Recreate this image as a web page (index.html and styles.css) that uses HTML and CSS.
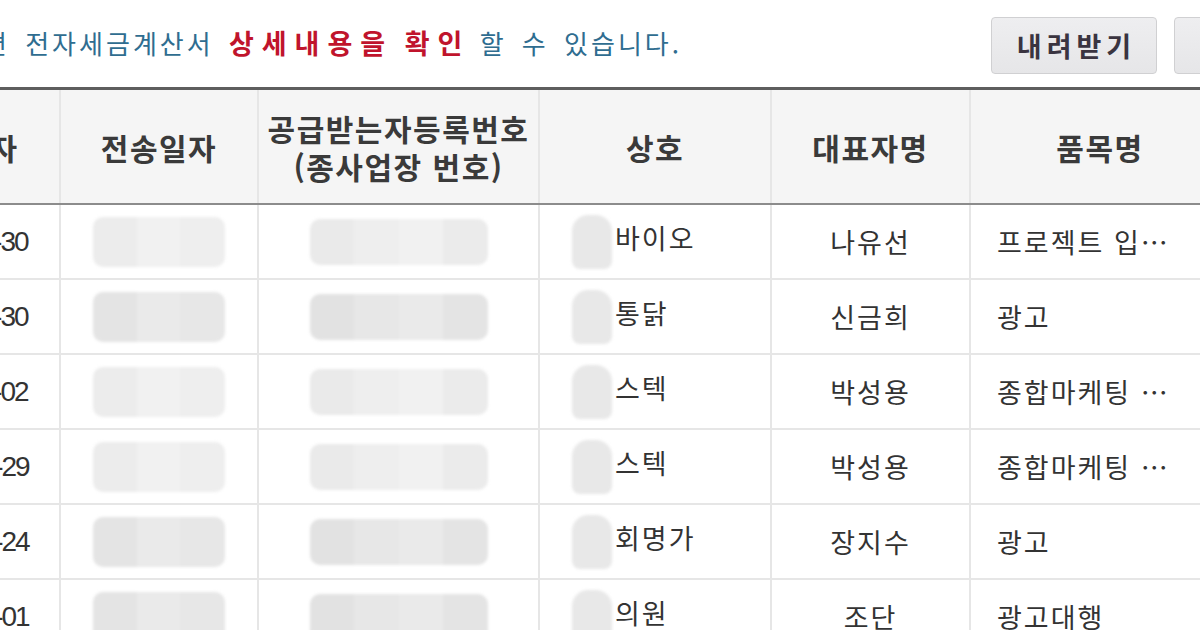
FILE: index.html
```html
<!DOCTYPE html>
<html lang="ko">
<head>
<meta charset="utf-8">
<title>전자세금계산서 목록</title>
<link rel="stylesheet" href="styles.css">
</head>
<body>
<div class="topbar">
  <p class="notice"><span class="cut">면</span> 전자세금계산서 <strong>상세내용을 확인</strong> 할 수 있습니다.</p>
  <div class="actions">
    <button class="btn">내려받기</button>
    <button class="btn btn-next">인쇄하기</button>
  </div>
</div>
<table class="grid">
  <colgroup>
    <col class="c1"><col class="c2"><col class="c3"><col class="c4"><col class="c5"><col class="c6">
  </colgroup>
  <thead>
    <tr>
      <th>작성일자</th>
      <th>전송일자</th>
      <th><span class="th-line">공급받는자등록번호</span><span class="th-line">(종사업장 번호)</span></th>
      <th>상호</th>
      <th>대표자명</th>
      <th>품목명</th>
    </tr>
  </thead>
  <tbody>
    <tr>
      <td class="date">2023-11-30</td>
      <td><span class="blob b-date v1"></span></td>
      <td><span class="blob b-reg v1"></span></td>
      <td class="name"><span class="blob b-name"></span>바이오</td>
      <td>나유선</td>
      <td class="item">프로젝트 입…</td>
    </tr>
    <tr>
      <td class="date">2023-11-30</td>
      <td><span class="blob b-date v2"></span></td>
      <td><span class="blob b-reg v2"></span></td>
      <td class="name"><span class="blob b-name"></span>통닭</td>
      <td>신금희</td>
      <td class="item">광고</td>
    </tr>
    <tr>
      <td class="date">2023-11-02</td>
      <td><span class="blob b-date v1"></span></td>
      <td><span class="blob b-reg v1"></span></td>
      <td class="name"><span class="blob b-name"></span>스텍</td>
      <td>박성용</td>
      <td class="item">종합마케팅 …</td>
    </tr>
    <tr>
      <td class="date">2023-10-29</td>
      <td><span class="blob b-date v1"></span></td>
      <td><span class="blob b-reg v1"></span></td>
      <td class="name"><span class="blob b-name"></span>스텍</td>
      <td>박성용</td>
      <td class="item">종합마케팅 …</td>
    </tr>
    <tr>
      <td class="date">2023-10-24</td>
      <td><span class="blob b-date v2"></span></td>
      <td><span class="blob b-reg v2"></span></td>
      <td class="name"><span class="blob b-name"></span>회명가</td>
      <td>장지수</td>
      <td class="item">광고</td>
    </tr>
    <tr>
      <td class="date">2023-10-01</td>
      <td><span class="blob b-date v2"></span></td>
      <td><span class="blob b-reg v2"></span></td>
      <td class="name"><span class="blob b-name"></span>의원</td>
      <td>조단</td>
      <td class="item">광고대행</td>
    </tr>
  </tbody>
</table>
</body>
</html>
```
FILE: styles.css
```css
* { box-sizing: border-box; }
html, body {
  margin: 0;
  padding: 0;
  background: #ffffff;
  width: 1200px;
  height: 630px;
  overflow: hidden;
  font-family: "Noto Sans CJK KR", "Noto Sans", sans-serif;
  color: #333333;
}

.topbar {
  height: 90px;
  display: flex;
  align-items: center;
  justify-content: space-between;
  border-bottom: 3px solid #5e5e5e;
  background: #ffffff;
}

.notice {
  margin: 0 0 2px -17px;
  font-size: 26px;
  letter-spacing: 3px;
  word-spacing: 5px;
  color: #2f6d90;
  white-space: nowrap;
}
.notice strong {
  color: #c0142c;
  font-weight: 700;
  font-size: 27px;
  letter-spacing: 8px;
  word-spacing: -4px;
  margin-right: -6px;
}

.actions {
  display: flex;
  gap: 17px;
  margin-right: -140px;
  align-self: flex-start;
  margin-top: 17px;
}

.btn {
  width: 166px;
  height: 57px;
  border: 1px solid #d0d0d2;
  border-radius: 4px;
  background: linear-gradient(#eeeef0, #e6e6e8);
  font-family: "Noto Sans CJK KR", sans-serif;
  font-size: 27px;
  font-weight: 700;
  color: #3a3440;
  letter-spacing: 5px;
  padding: 0 0 0 5px;
}

.grid {
  margin-left: -138px;
  width: 1368px;
  table-layout: fixed;
  border-collapse: collapse;
}
.c1 { width: 198px; }
.c2 { width: 198px; }
.c3 { width: 281px; }
.c4 { width: 232px; }
.c5 { width: 199px; }
.c6 { width: 260px; }

.grid th {
  height: 114px;
  background: #f5f5f5;
  font-size: 30px;
  font-weight: 700;
  letter-spacing: 1.5px;
  line-height: 38px;
  color: #3a3a3a;
  border-right: 2px solid #e6e6e6;
  border-bottom: 2px solid #8c8c8c;
  text-align: center;
  padding: 0;
}
.th-line {
  display: block;
  white-space: nowrap;
}

.grid td {
  height: 75px;
  font-size: 27px;
  letter-spacing: 2px;
  text-align: center;
  color: #333333;
  border-right: 2px solid #e6e6e6;
  border-bottom: 2px solid #e6e6e6;
  padding: 0;
  white-space: nowrap;
  overflow: hidden;
}

.grid td.date {
  font-family: "Liberation Sans", sans-serif;
  font-size: 28px;
  letter-spacing: -2px;
  text-align: center;
  padding-left: 13px;
}

.grid td.name {
  text-align: left;
  padding-left: 32px;
}
.grid td.item {
  text-align: left;
  padding-left: 26px;
}

.blob {
  display: inline-block;
  vertical-align: middle;
  border-radius: 10px;
  filter: blur(1.5px);
}
.b-date {
  width: 132px;
  height: 50px;
  background: linear-gradient(90deg, #ececec 0 33%, #f1f1f1 33% 66%, #eeeeee 66% 100%);
}
.b-reg {
  width: 178px;
  height: 46px;
  background: linear-gradient(90deg, #eaeaea 0 25%, #eeeeee 25% 50%, #f1f1f1 50% 75%, #ebebeb 75% 100%);
}
.v2.b-date {
  background: linear-gradient(90deg, #e4e4e4 0 33%, #eaeaea 33% 66%, #e7e7e7 66% 100%);
}
.v2.b-reg {
  background: linear-gradient(90deg, #e2e2e2 0 25%, #e7e7e7 25% 50%, #eaeaea 50% 75%, #e4e4e4 75% 100%);
}
.b-name {
  width: 40px;
  height: 54px;
  margin-right: 3px;
  background: #e8e8e8;
  border-radius: 16px 16px 8px 8px;
}
```
